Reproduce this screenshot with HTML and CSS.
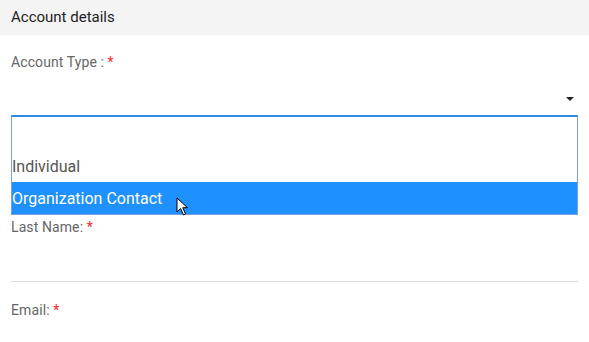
FILE: index.html
```html
<!DOCTYPE html>
<html lang="en">
<head>
    <meta charset="UTF-8">
    <meta name="viewport" content="width=device-width, initial-scale=1.0">
    <title>Account details</title>
    <link rel="stylesheet" href="styles.css">
</head>
<body>
    <div class="section-header">Account details</div>

    <div class="form-body">
        <div class="field select-field">
            <label>Account Type : <span class="req">*</span></label>
            <div class="select-row">
                <span class="caret"></span>
            </div>
            <ul class="options">
                <li class="option empty"></li>
                <li class="option">Individual</li>
                <li class="option selected">Organization Contact<svg class="cursor" width="14" height="20" viewBox="0 0 14 20"><path d="M1 1 L1 15 L4.5 11.5 L7.5 18 L9.5 17 L6.8 10.7 L11.5 10.7 Z" fill="#fff" stroke="#000" stroke-width="1"/></svg></li>
            </ul>
        </div>

        <div class="field text-field">
            <label>Last Name: <span class="req">*</span></label>
            <div class="input-line"></div>
        </div>

        <div class="field text-field">
            <label>Email: <span class="req">*</span></label>
        </div>
    </div>
</body>
</html>
```

FILE: styles.css
```css
body {
    margin: 0;
    font-family: Roboto, "Liberation Sans", Arial, sans-serif;
    background: #fff;
    width: 589px;
    overflow: hidden;
}
.section-header {
    height: 35px;
    line-height: 35px;
    background-color: #f4f4f4;
    padding-left: 11px;
    font-size: 15px;
    color: #222;
}
.form-body {
    padding: 0 11px;
}
label {
    display: block;
    font-size: 14px;
    line-height: 16px;
    color: #666;
    letter-spacing: 0.1px;
}
.req {
    color: #f22;
}
.select-field {
    padding-top: 19px;
}
.select-row {
    height: 45px;
    position: relative;
}
.caret {
    position: absolute;
    right: 4px;
    top: 27px;
    width: 0;
    height: 0;
    border-left: 4px solid transparent;
    border-right: 4px solid transparent;
    border-top: 4px solid #222;
}
.options {
    list-style: none;
    margin: 0;
    padding: 0;
    width: 565px;
    border: 1px solid #7f9fd6;
    border-top: 2px solid #2b8ce6;
}
.option {
    height: 32px;
    line-height: 33px;
    padding-left: 0;
    font-size: 16px;
    color: #555;
    position: relative;
}
.option.empty {
    height: 33px;
}
.option.selected {
    background-color: #1e90ff;
    color: #fff;
}
.cursor {
    position: absolute;
    left: 164px;
    top: 15px;
}
.text-field {
    padding-top: 4px;
}
.input-line {
    height: 46px;
    border-bottom: 1px solid #dcdcdc;
}
.text-field + .text-field {
    padding-top: 20px;
}
```
